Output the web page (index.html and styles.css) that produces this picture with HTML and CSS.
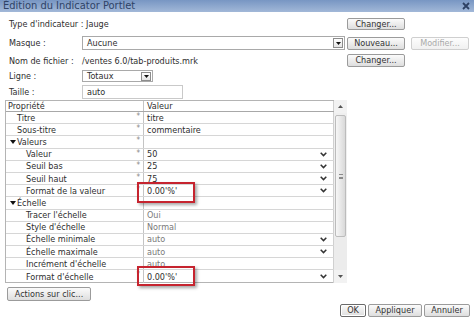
FILE: index.html
```html
<!DOCTYPE html>
<html>
<head>
    <title>Édition du Indicator Portlet</title>
    <meta charset="UTF-8">
    <link rel="stylesheet" href="styles.css">
</head>

<body>
    <div class="dialog">
        <div class="titlebar">
            <span class="title">Édition du Indicator Portlet</span>
            <svg class="close" width="8" height="8" viewBox="0 0 8 8"><path d="M1 1 L7 7 M7 1 L1 7" stroke="#2d4063" stroke-width="1.8" /></svg>
        </div>

        <div class="row r1">
            <span class="wide">Type d'indicateur : Jauge</span>
            <button class="btn">Changer...</button>
        </div>
        <div class="row r2">
            <span class="label">Masque :</span>
            <div class="select big">
                <span>Aucune</span>
                <span class="arrow"><svg width="5" height="3" viewBox="0 0 5 3"><path d="M0 0 H5 L2.5 3 Z" fill="#111" /></svg></span>
            </div>
            <button class="btn">Nouveau...</button>
            <button class="btn" disabled>Modifier...</button>
        </div>
        <div class="row r3">
            <span class="label">Nom de fichier :</span>
            <span class="ctrl">/ventes 6.0/tab-produits.mrk</span>
            <button class="btn">Changer...</button>
        </div>
        <div class="row r4">
            <span class="label">Ligne :</span>
            <div class="select small">
                <span>Totaux</span>
                <span class="arrow"><svg width="5" height="3" viewBox="0 0 5 3"><path d="M0 0 H5 L2.5 3 Z" fill="#111" /></svg></span>
            </div>
        </div>
        <div class="row r5">
            <span class="label">Taille :</span>
            <div class="input">auto</div>
        </div>

        <div class="props">
            <div class="grid">
                <div class="prow head"><div class="pname">Propriété</div><div class="pval">Valeur</div></div>
                <div class="prow"><div class="pname l1">Titre<span class="req">*</span></div><div class="pval">titre</div></div>
                <div class="prow"><div class="pname l1">Sous-titre<span class="req">*</span></div><div class="pval">commentaire</div></div>
                <div class="prow"><div class="pname"><span class="tw"><svg width="6" height="4" viewBox="0 0 6 4"><path d="M0 0 H6 L3 4 Z" fill="#111" /></svg>Valeurs</span><span class="req">*</span></div><div class="pval"></div></div>
                <div class="prow"><div class="pname l2">Valeur<span class="req">*</span></div><div class="pval">50<svg class="chev" width="7" height="5" viewBox="0 0 7 5"><path d="M0.7 0.8 L3.5 3.6 L6.3 0.8" fill="none" stroke="#333" stroke-width="1.5" /></svg></div></div>
                <div class="prow"><div class="pname l2">Seuil bas<span class="req">*</span></div><div class="pval">25<svg class="chev" width="7" height="5" viewBox="0 0 7 5"><path d="M0.7 0.8 L3.5 3.6 L6.3 0.8" fill="none" stroke="#333" stroke-width="1.5" /></svg></div></div>
                <div class="prow"><div class="pname l2">Seuil haut<span class="req">*</span></div><div class="pval">75<svg class="chev" width="7" height="5" viewBox="0 0 7 5"><path d="M0.7 0.8 L3.5 3.6 L6.3 0.8" fill="none" stroke="#333" stroke-width="1.5" /></svg></div></div>
                <div class="prow"><div class="pname l2">Format de la valeur<span class="req">*</span></div><div class="pval">0.00'%'<svg class="chev" width="7" height="5" viewBox="0 0 7 5"><path d="M0.7 0.8 L3.5 3.6 L6.3 0.8" fill="none" stroke="#333" stroke-width="1.5" /></svg></div></div>
                <div class="prow"><div class="pname"><span class="tw"><svg width="6" height="4" viewBox="0 0 6 4"><path d="M0 0 H6 L3 4 Z" fill="#111" /></svg>Échelle</span></div><div class="pval"></div></div>
                <div class="prow"><div class="pname l2">Tracer l'échelle</div><div class="pval dim">Oui</div></div>
                <div class="prow"><div class="pname l2">Style d'échelle</div><div class="pval dim">Normal</div></div>
                <div class="prow"><div class="pname l2">Échelle minimale</div><div class="pval dim">auto<svg class="chev" width="7" height="5" viewBox="0 0 7 5"><path d="M0.7 0.8 L3.5 3.6 L6.3 0.8" fill="none" stroke="#333" stroke-width="1.5" /></svg></div></div>
                <div class="prow"><div class="pname l2">Échelle maximale</div><div class="pval dim">auto<svg class="chev" width="7" height="5" viewBox="0 0 7 5"><path d="M0.7 0.8 L3.5 3.6 L6.3 0.8" fill="none" stroke="#333" stroke-width="1.5" /></svg></div></div>
                <div class="prow"><div class="pname l2">Incrément d'échelle</div><div class="pval dim">auto</div></div>
                <div class="prow"><div class="pname l2">Format d'échelle<span class="req">*</span></div><div class="pval">0.00'%'<svg class="chev" width="7" height="5" viewBox="0 0 7 5"><path d="M0.7 0.8 L3.5 3.6 L6.3 0.8" fill="none" stroke="#333" stroke-width="1.5" /></svg></div></div>
            </div>
            <div class="scrollbar">
                <div class="sb-btn"><svg width="5" height="3" viewBox="0 0 5 3"><path d="M0 3 H5 L2.5 0 Z" fill="#555" /></svg></div>
                <div class="sb-thumb"><span class="grip"></span></div>
                <div class="sb-track"></div>
                <div class="sb-btn"><svg width="5" height="3" viewBox="0 0 5 3"><path d="M0 0 H5 L2.5 3 Z" fill="#555" /></svg></div>
            </div>
        </div>

        <button class="btn actions">Actions sur clic...</button>

        <div class="footer">
            <button class="btn ok">OK</button>
            <button class="btn">Appliquer</button>
            <button class="btn">Annuler</button>
        </div>

        <div class="mark m1"></div>
        <div class="mark m2"></div>
    </div>
</body>
</html>
```

FILE: styles.css
```css
html { margin: 0; padding: 0; border: 0; }
body { margin: 0; background: #fff; font-family: "DejaVu Sans Condensed", "DejaVu Sans", sans-serif; font-size: 9px; color: #2e2e2e; }
.dialog { position: relative; width: 474px; height: 322px; overflow: hidden; }

.titlebar { height: 12px; display: flex; align-items: center; justify-content: space-between; padding: 0 4px 0 3px; background: linear-gradient(#7896c3, #a2b8d8); }
.title { font-size: 11px; line-height: 12px; color: #2f4367; margin-top: -1px; }
.close { margin-top: -1px; }

.row { display: flex; align-items: center; padding-left: 9px; }
.r1 { margin-top: 6px; height: 12px; }
.r2 { margin-top: 6px; height: 14px; }
.r3 { margin-top: 4px; height: 13px; }
.r4 { margin-top: 3px; height: 12px; }
.r5 { margin-top: 3px; height: 14px; }
.wide { width: 336px; }
.label { width: 73px; }
.ctrl { width: 263px; }

.btn { font-family: inherit; font-size: 9px; color: #333; height: 13px; width: 58px; padding: 0; margin-left: 2px; border: 1px solid #9b9b9b; border-radius: 2px; background: linear-gradient(#fbfbfb, #dedede); line-height: 11px; }
.btn + .btn { margin-left: 6px; }
.btn:disabled { color: #aaa; border-color: #cfcfcf; background: linear-gradient(#fdfdfd, #f0f0f0); }
.r1 .btn { height: 12px; }

.select { box-sizing: border-box; height: 100%; border: 1px solid #a9a9a9; display: flex; align-items: center; justify-content: space-between; padding-left: 4px; }
.select.big { width: 263px; }
.select.small { width: 71px; height: 12px; }
.arrow { width: 10px; height: 10px; margin-right: 1px; box-sizing: border-box; border: 1px solid #8c8c8c; background: linear-gradient(#fff, #e4e4e4); display: flex; align-items: center; justify-content: center; }
.small .arrow { height: 9px; }
.input { box-sizing: border-box; width: 101px; height: 14px; border: 1px solid #c9c9c9; padding-left: 4px; line-height: 12px; }

.props { display: flex; margin: 1px 0 0 5px; height: 183px; }
.grid { width: 329px; box-sizing: border-box; border: 1px solid #b4b4b4; border-right: 0; }
.prow { display: flex; height: 12.2px; box-sizing: border-box; border-bottom: 1px solid #d6d6d6; }
.prow.head { height: 11px; border-bottom-color: #a8a8a8; }
.prow:last-child { border-bottom: 0; }
.pname { width: 138px; box-sizing: border-box; display: flex; align-items: center; justify-content: space-between; padding: 0 3px 0 2px; border-right: 1px solid #c4c4c4; }
.pname.l1 { padding-left: 11px; }
.pname.l2 { padding-left: 20px; }
.tw { display: flex; align-items: center; gap: 1px; padding-left: 2px; }
.req { color: #888; font-size: 8px; line-height: 6px; align-self: flex-start; margin-top: 2px; }
.pval { flex: 1; display: flex; align-items: center; justify-content: space-between; padding: 0 6px 0 3px; border-right: 1px solid #d0d0d0; }
.pval.dim { color: #7a7a7a; }
.chev { display: block; }

.scrollbar { width: 13px; display: flex; flex-direction: column; background: #efefef; }
.sb-btn { height: 13px; display: flex; align-items: center; justify-content: center; background: #f2f2f2; }
.sb-thumb { height: 122px; margin: 2px 0 0 1px; width: 11px; box-sizing: border-box; border: 1px solid #bcbcbc; border-radius: 2px; background: linear-gradient(to right, #f7f7f7, #d9d9d9); display: flex; align-items: center; justify-content: center; }
.grip { width: 4px; height: 5px; border-top: 1px solid #8a8a8a; border-bottom: 1px solid #8a8a8a; background: linear-gradient(transparent 2px, #8a8a8a 2px, #8a8a8a 3px, transparent 3px); box-sizing: border-box; }
.sb-track { flex: 1; background: #ececec; }

.actions { display: block; margin: 4px 0 0 7px; width: 84px; height: 14px; }

.footer { display: flex; justify-content: flex-end; padding-right: 4px; margin-top: 3px; }
.footer .btn { height: 13px; margin-left: 2px; }
.ok { width: 26px; border-color: #6a6a6a; box-shadow: inset 0 0 0 1px #fff; }
.footer .btn:nth-child(2) { width: 54px; }
.footer .btn:nth-child(3) { width: 46px; }

.mark { position: absolute; left: 137px; width: 58px; box-sizing: border-box; border: 2px solid #c6242f; box-shadow: 2px 2px 3px rgba(0, 0, 0, 0.35); }
.m1 { top: 182px; height: 21px; }
.m2 { top: 266px; height: 20px; }
```
